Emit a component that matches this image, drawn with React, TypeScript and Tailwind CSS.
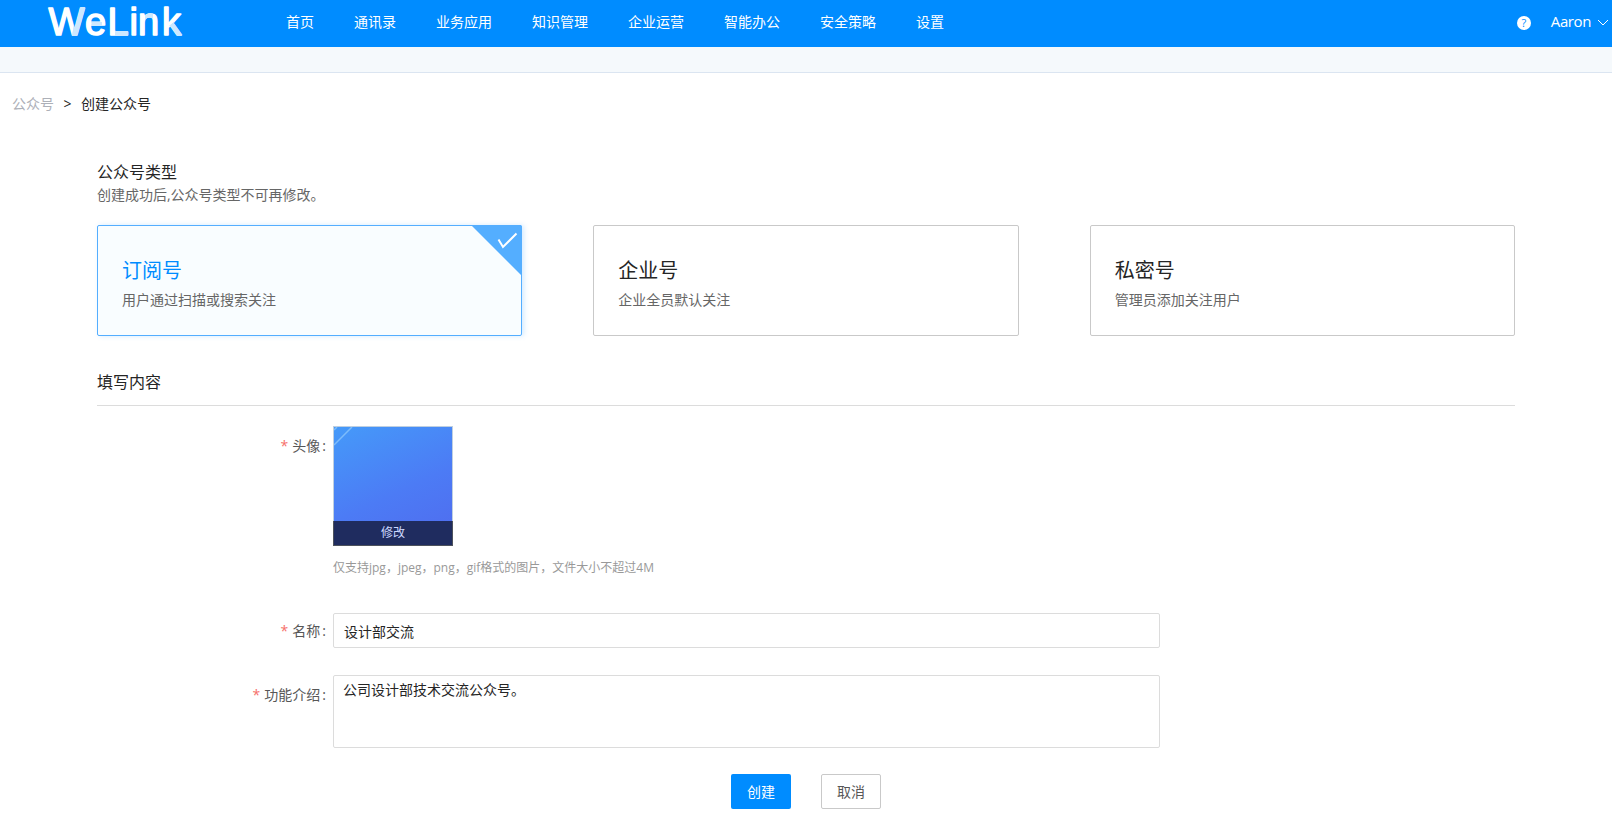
import { useState } from "react";
import type { ReactNode } from "react";
import { clsx } from "clsx";

const navItems = ["首页", "通讯录", "业务应用", "知识管理", "企业运营", "智能办公", "安全策略", "设置"];

const accountTypes = [
  { id: "subscribe", title: "订阅号", desc: "用户通过扫描或搜索关注" },
  { id: "enterprise", title: "企业号", desc: "企业全员默认关注" },
  { id: "private", title: "私密号", desc: "管理员添加关注用户" },
];

function Logo() {
  const letters = {
    x: "48.5 85 107.5 129.5 138 162",
    y: 34.5,
    fontSize: 38,
    fontFamily: "Liberation Sans, sans-serif",
    strokeWidth: 1.5,
    strokeLinejoin: "round" as const,
  };
  return (
    <svg width="140" height="47" viewBox="46 0 140 47" className="-ml-0.5 shrink-0 overflow-visible">
      {/* Pale strokes inside the letters */}
      <clipPath id="logo-accents">
        <path d="M77.5 4H86V20L79.5 36H72Z" />
        <path d="M91.5 22H102V27H91.5Z" />
        <path d="M115 30H128V36H115Z" />
        <path d="M145 13H153V19H145Z" />
        <path d="M169.5 25.5L174 22L187 36H173Z" />
      </clipPath>
      <text {...letters} fill="#fff" stroke="#fff">WeLink</text>
      <text {...letters} fill="#cce8ff" stroke="#cce8ff" clipPath="url(#logo-accents)" aria-hidden="true">WeLink</text>
    </svg>
  );
}

function Header() {
  return (
    <header className="flex h-[47px] items-center bg-[#008cff] pl-12 text-white">
      <Logo />
      <nav className="ml-[100px] flex gap-10 pb-[3px] text-sm">
        {navItems.map((item) => (
          <a key={item} href="#">{item}</a>
        ))}
      </nav>
      <div className="ml-auto flex items-center pr-[3px] pb-[2px]">
        <span className="mr-5 flex h-[14px] w-[14px] items-center justify-center rounded-full bg-white text-[11px] leading-none text-[#008cff]">?</span>
        <span className="pb-[3px] text-[15px] tracking-[-0.4px]">Aaron</span>
        <svg width="12" height="8" viewBox="0 0 12 8" className="ml-1.5" fill="none" stroke="#fff">
          <path d="M1 1l5 5 5-5" />
        </svg>
      </div>
    </header>
  );
}

interface TypeCardProps {
  title: string;
  desc: string;
  selected: boolean;
  onSelect: () => void;
}

function TypeCard({ title, desc, selected, onSelect }: TypeCardProps) {
  return (
    <button
      onClick={onSelect}
      className={clsx(
        "relative flex h-[111px] flex-col justify-start rounded-[2px] border px-6 pt-[30px] text-left",
        selected ? "border-[#54aeff] bg-[#f9fdff] shadow-[2px_0_5px_rgba(84,174,255,0.25)]" : "border-[#c9c9c9] bg-white"
      )}
    >
      <h3 className={clsx("text-xl leading-[30px]", selected ? "text-[#008cff]" : "text-[#252525]")}>{title}</h3>
      <p className="mt-[3px] text-sm leading-[22px] text-[#666]">{desc}</p>
      {/* Selected corner */}
      {selected && (
        <svg width="51" height="51" viewBox="0 0 51 51" className="absolute -top-px -right-px">
          <path d="M0 0H49Q51 0 51 2V51Z" fill="#54aeff" />
          <path d="M27.5 14.5L32 22L45.5 8.5" fill="none" stroke="#fff" strokeWidth="2" />
        </svg>
      )}
    </button>
  );
}

interface FormRowProps {
  label: string;
  labelClass: string;
  children: ReactNode;
}

function FormRow({ label, labelClass, children }: FormRowProps) {
  return (
    <div className="flex">
      <div className={clsx("w-[229px] shrink-0 text-right text-sm leading-5 text-[#575757]", labelClass)}>
        <span className="mr-1 text-[#f66f6a]">*</span>
        {label}
        <span className="ml-0.5">:</span>
      </div>
      <div className="ml-[7px] w-[827px]">{children}</div>
    </div>
  );
}

export default function App() {
  const [type, setType] = useState("subscribe");

  return (
    <div className="h-[831px] overflow-hidden bg-white font-['Open_Sans','Noto_Sans_CJK_SC',sans-serif] text-[#252525]">
      <Header />
      <div className="h-[26px] border-b border-[#dbe5f1] bg-[#f5f9fc]" />

      {/* Breadcrumb */}
      <div className="flex gap-[9.5px] pt-5 pl-3 text-sm leading-[22px]">
        <span className="text-[#adb0b8]">公众号</span>
        <span>&gt;</span>
        <span>创建公众号</span>
      </div>

      <main className="mx-[97px] pt-[45px]">
        <h2 className="text-base leading-6">公众号类型</h2>
        <p className="text-sm leading-[22px] text-[#666]">创建成功后,公众号类型不可再修改。</p>

        <div className="mt-[19px] grid grid-cols-3 gap-[71px]">
          {accountTypes.map((item) => (
            <TypeCard
              key={item.id}
              title={item.title}
              desc={item.desc}
              selected={item.id === type}
              onSelect={() => setType(item.id)}
            />
          ))}
        </div>

        <h2 className="mt-[34px] border-b border-[#dcdcdc] pb-[11px] text-base leading-6">填写内容</h2>

        <div className="pt-5">
          <FormRow label="头像" labelClass="pt-[10px]">
            <div className="flex h-[120px] w-[120px] flex-col justify-end border border-[#bfcfe0] bg-[linear-gradient(155deg,#459af9_0%,#4c7bf5_55%,#506bee_100%)]">
              <svg width="24" height="20" viewBox="0 0 24 20" className="mb-auto" fill="none" stroke="#7cbcfb" strokeWidth="1.5" aria-hidden="true">
                <path d="M0 18L18 0M0 3L3 0" />
              </svg>
              <button className="-mx-px -mb-px h-[25px] border border-t-0 border-[#4d525c] bg-[#1f2c5f] text-xs text-[#cdd9ff]">修改</button>
            </div>
            <p className="mt-[13px] text-xs leading-[18px] text-[#999]">仅支持jpg，jpeg，png，gif格式的图片，文件大小不超过4M</p>
          </FormRow>

          <div className="mt-[36px]">
            <FormRow label="名称" labelClass="pt-2">
              <input
                className="block h-[35px] w-full rounded-[2px] border border-[#dcdcdc] px-[10px] pt-px text-sm text-[#252525]"
                defaultValue="设计部交流"
              />
            </FormRow>
          </div>

          <div className="mt-[27px]">
            <FormRow label="功能介绍" labelClass="pt-[10px]">
              <textarea
                className="block h-[73px] w-full resize-none rounded-[2px] border border-[#dcdcdc] px-[9px] pt-1 text-sm leading-5 text-[#252525]"
                defaultValue="公司设计部技术交流公众号。"
              />
            </FormRow>
          </div>
        </div>

        {/* Actions */}
        <div className="mt-[26px] ml-[634px] flex gap-[30px] text-sm">
          <button className="h-[35px] w-[60px] rounded-[2px] bg-[#008cff] pt-px text-white">创建</button>
          <button className="h-[35px] w-[60px] rounded-[2px] border border-[#c9c9c9] bg-white pt-px text-[#575757]">取消</button>
        </div>
      </main>
    </div>
  );
}
